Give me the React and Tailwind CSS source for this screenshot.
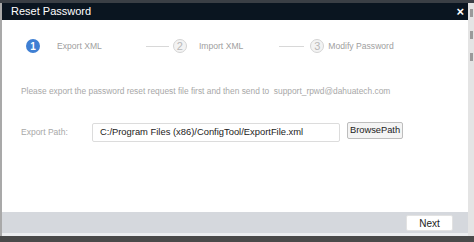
import React from 'react'

export default function App() {
  return (
    <div className="w-[474px] h-[242px] bg-[#c9c9c9] flex flex-col overflow-hidden" style={{ fontFamily: '"Liberation Sans", Arial, sans-serif' }}>
      <div className="h-[3px] bg-[#3a3f45]" />
      <div className="flex flex-1">
        <div className="w-[2px] bg-[#a9a9a9]" />
        <div className="w-[466px] flex flex-col bg-white">
          {/* Title bar */}
          <div className="h-[17px] bg-[#0a1520] flex items-center justify-between pl-[9px] pr-[4px]">
            <span className="text-white text-[11px]">Reset Password</span>
            <span className="text-white text-[13px] font-bold leading-none">×</span>
          </div>

          {/* Steps */}
          <div className="flex items-center pl-[24px] mt-[19px] h-[14px]">
            <div className="flex items-center gap-[17px]">
              <div className="w-[14px] h-[14px] rounded-full bg-[#3f7fd3] text-white text-[10px] font-bold flex items-center justify-center">1</div>
              <span className="text-[8.6px] text-[#a0a0a0]">Export XML</span>
            </div>
            <div className="w-[23px] h-px bg-[#d8d8d8] ml-[44px] mr-[4px]" />
            <div className="flex items-center gap-[12px]">
              <div className="w-[14px] h-[14px] rounded-full border border-[#d4d4d4] bg-[#f3f3f3] text-[#b8b8b8] text-[11px] flex items-center justify-center">2</div>
              <span className="text-[8.6px] text-[#a0a0a0]">Import XML</span>
            </div>
            <div className="w-[25px] h-px bg-[#d8d8d8] ml-[36px] mr-[6px]" />
            <div className="flex items-center gap-[4px]">
              <div className="w-[14px] h-[14px] rounded-full border border-[#d4d4d4] bg-[#f3f3f3] text-[#b8b8b8] text-[11px] flex items-center justify-center">3</div>
              <span className="text-[8.6px] text-[#a0a0a0]">Modify Password</span>
            </div>
          </div>

          {/* Info */}
          <div className="pl-[19px] mt-[32px] text-[8.4px] text-[#a8a8a8] whitespace-nowrap">
            Please export the password reset request file first and then send to&nbsp; support_rpwd@dahuatech.com
          </div>

          {/* Export path */}
          <div className="flex items-center pl-[19px] mt-[25px]">
            <span className="w-[71px] text-[8.5px] text-[#a8a8a8]">Export Path:</span>
            <div className="w-[248px] h-[19px] border border-[#dcdcdc] rounded-[2px] flex items-center pl-[7px] text-[9.4px] text-[#222]">
              C:/Program Files (x86)/ConfigTool/ExportFile.xml
            </div>
            <button className="ml-[7px] h-[17px] px-[2px] border border-[#bdbdbd] rounded-[2px] bg-[#f4f4f4] text-[9.3px] text-[#222] -mt-[3px]">
              BrowsePath
            </button>
          </div>

          <div className="flex-1" />

          {/* Footer */}
          <div className="h-[21px] bg-[#d5d8dd] flex items-center justify-end pr-[15px]">
            <button className="w-[47px] h-[16px] bg-white border border-[#e2e2e2] rounded-[2px] text-[10px] text-[#222]">
              Next
            </button>
          </div>
          <div className="h-[3px] bg-[#eceef0]" />
        </div>
        <div className="flex-1 bg-[#e4e4e4] flex flex-col items-center pt-[6px] gap-[14px]">
          <div className="w-[3px] h-[8px] bg-[#9a9a9a]" />
          <div className="w-[3px] h-[8px] bg-[#9a9a9a]" />
          <div className="w-[3px] h-[8px] bg-[#9a9a9a]" />
        </div>
      </div>
      <div className="h-[6px] bg-[#4a4a4a]" />
    </div>
  )
}
